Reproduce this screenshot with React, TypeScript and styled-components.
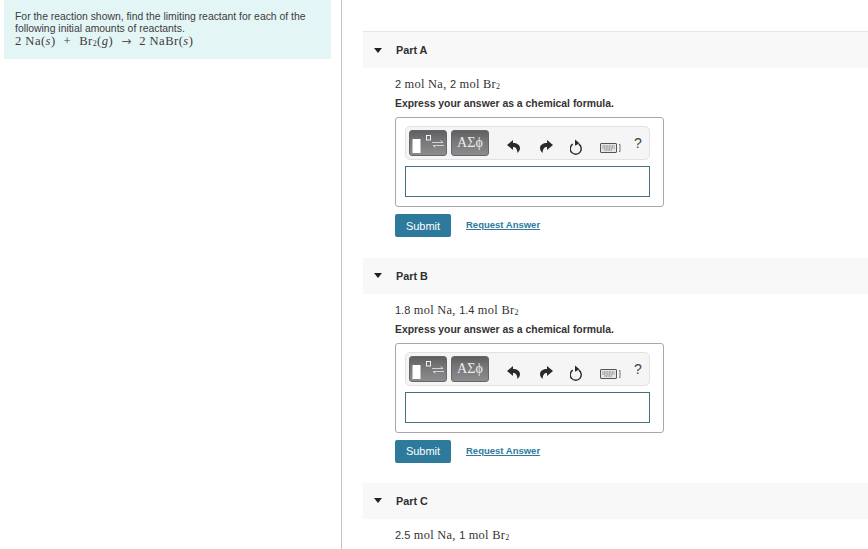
import React from 'react';
import styled, { createGlobalStyle } from 'styled-components';

const GlobalStyle = createGlobalStyle`
  html, body {
    margin: 0;
    padding: 0;
    background: #fff;
    overflow: hidden;
  }
  body {
    font-family: "Liberation Sans", Arial, sans-serif;
    color: #333;
  }
`;

const Page = styled.div`
  display: flex;
  width: 868px;
  height: 549px;
  overflow: hidden;
`;

const LeftPane = styled.div`
  flex: none;
  box-sizing: border-box;
  width: 342px;
  height: 549px;
  padding-left: 4px;
  border-right: 1px solid #c4c4c4;
`;

const Intro = styled.div`
  box-sizing: border-box;
  width: 327px;
  height: 59px;
  padding: 11px 11px 0;
  background: #e4f5f6;
  font-size: 10.4px;
  line-height: 12px;
  color: #3c3c3c;
`;

const Equation = styled.div`
  font-family: "Liberation Serif", "Times New Roman", serif;
  font-size: 12.6px;
  line-height: 13px;
  letter-spacing: 0.45px;
  white-space: nowrap;
  i { font-style: italic; }
  sub { font-size: 8px; line-height: 0; vertical-align: -1px; }
`;

const Arrow = styled.span`
  font-family: "DejaVu Sans", sans-serif;
  font-size: 12px;
  line-height: 0;
  letter-spacing: 0;
  color: #555;
  margin: 0 8px;
`;

const Plus = styled.span`
  line-height: 0;
  margin: 0 8px;
`;

const RightPane = styled.div`
  flex: 1;
  padding: 31px 0 0 21px;
  min-width: 0;
`;

const PartHeader = styled.div<{ $first: boolean }>`
  display: flex;
  align-items: center;
  box-sizing: border-box;
  height: ${(p) => (p.$first ? '37px' : '35.5px')};
  padding-left: 11px;
  background: #f8f8f8;
  border-top: ${(p) => (p.$first ? '1px solid #e6e6e6' : 'none')};
`;

const Caret = styled.span`
  width: 0;
  height: 0;
  border-left: 4.5px solid transparent;
  border-right: 4.5px solid transparent;
  border-top: 5px solid #222;
`;

const PartTitle = styled.span`
  margin-left: 14px;
  font-size: 10.8px;
  font-weight: 700;
  color: #2f2f2f;
`;

const PartBody = styled.div<{ $first: boolean }>`
  box-sizing: border-box;
  height: ${(p) => (p.$first ? '190px' : '189.5px')};
  padding: 9px 0 0 32px;
`;

const Amounts = styled.div`
  font-family: "Liberation Serif", "Times New Roman", serif;
  font-size: 12.4px;
  line-height: 15px;
  letter-spacing: 0.3px;
  color: #333;
  sub { font-size: 8px; line-height: 0; vertical-align: -1px; }
`;

const Num = styled.span`
  font-family: "Liberation Sans", Arial, sans-serif;
  font-size: 11px;
  letter-spacing: 0;
`;

const Prompt = styled.div`
  margin-top: 5px;
  font-size: 10.4px;
  line-height: 14px;
  font-weight: 700;
  color: #333;
`;

const AnswerBox = styled.div`
  box-sizing: border-box;
  width: 269px;
  height: 90px;
  margin-top: 6px;
  padding: 8px 13px 0 9px;
  border: 1px solid #a9a9a9;
  border-radius: 3px;
`;

const Toolbar = styled.div`
  display: flex;
  align-items: flex-start;
  box-sizing: border-box;
  width: 245px;
  height: 34px;
  padding: 3px 0 0 3px;
  background: #f5f5f5;
  border: 1px solid #e2e2e2;
  border-radius: 5px;
`;

const TemplateButton = styled.div`
  display: flex;
  flex: none;
  align-items: center;
  justify-content: center;
  box-sizing: border-box;
  width: 38px;
  height: 26px;
  margin-right: 4px;
  border: 1px solid #666;
  border-radius: 3px;
  background: linear-gradient(#5f5f61, #767678 40%, #8c8c8e);
  color: #ececec;
  font-family: "Liberation Serif", "Times New Roman", serif;
  font-size: 14px;
  letter-spacing: 0.2px;
`;

const ToolIcon = styled.svg<{ $left: number; $top: number }>`
  flex: none;
  margin-left: ${(p) => p.$left}px;
  margin-top: ${(p) => p.$top}px;
`;

const Help = styled.span`
  flex: none;
  margin-left: 13px;
  margin-top: 5px;
  font-size: 14px;
  color: #444;
`;

const AnswerInput = styled.div`
  box-sizing: border-box;
  width: 245px;
  height: 31px;
  margin-top: 6px;
  border: 1px solid #43717f;
  background: #fff;
`;

const Actions = styled.div`
  display: flex;
  align-items: center;
  margin-top: 7px;
`;

const SubmitButton = styled.div`
  display: flex;
  align-items: center;
  justify-content: center;
  width: 56px;
  height: 23px;
  background: #2e7a9c;
  border-radius: 2px;
  color: #fff;
  font-size: 11px;
`;

const RequestLink = styled.span`
  margin-left: 15px;
  margin-top: -2px;
  color: #2e7a9c;
  font-size: 9.5px;
  font-weight: 700;
  text-decoration: underline;
`;

const TemplateIcon = () => (
  <svg width="34" height="22" viewBox="0 0 34 22">
    <rect x="1.5" y="7" width="8" height="14" fill="#fff" />
    <rect x="15.5" y="3.5" width="4" height="4.5" fill="none" stroke="#fff" strokeWidth="0.9" />
    <path d="M21 10.5h11l-2.5-2M33 13.5H22l2.5 2" fill="none" stroke="#e8e8e8" strokeWidth="0.8" />
  </svg>
);

const Undo = () => (
  <ToolIcon $left={14} $top={10} width="13" height="13" viewBox="0 0 13 13">
    <path d="M6 0L0 5l6 5V7c2.500 0 4 1 4.500 6 1.500-1.500 2.500-3 2.500-5 0-3-3-5-7-5z" fill="#2a2a2a" />
  </ToolIcon>
);

const Redo = () => (
  <ToolIcon $left={20} $top={10} width="13" height="13" viewBox="0 0 13 13">
    <path d="M7 0l6 5-6 5V7c-2.500 0-4 1-4.500 6C1 11.500 0 10 0 8c0-3 3-5 7-5z" fill="#2a2a2a" />
  </ToolIcon>
);

const Reset = () => (
  <ToolIcon $left={17} $top={9} width="13" height="16" viewBox="0 0 13 16">
    <path d="M8.800 5.200A5.500 5.500 0 1 1 2.700 5.200" fill="none" stroke="#2a2a2a" strokeWidth="1.400" />
    <path d="M5 .5l4.500 3.700L5 6.800z" fill="#2a2a2a" />
  </ToolIcon>
);

const Keyboard = () => (
  <ToolIcon $left={17} $top={13} width="21" height="10" viewBox="0 0 21 10">
    <rect x=".5" y=".5" width="16" height="9" rx=".5" fill="#e6e6e6" stroke="#555" />
    <path d="M2.500 3h12M2.500 5h12M4.500 7h8" stroke="#666" strokeWidth="1" strokeDasharray="1 .6" />
    <path d="M19 1.500h1v7h-1" fill="none" stroke="#555" strokeWidth=".8" />
  </ToolIcon>
);

interface PartData {
  title: string;
  sodium: string;
  bromine: string;
  open: boolean;
}

const parts: PartData[] = [
  { title: 'Part A', sodium: '2', bromine: '2', open: true },
  { title: 'Part B', sodium: '1.8', bromine: '1.4', open: true },
  { title: 'Part C', sodium: '2.5', bromine: '1', open: false },
];

const App: React.FC = () => {
  return (
    <Page>
      <GlobalStyle />
      <LeftPane>
        <Intro>
          For the reaction shown, find the limiting reactant for each of the following initial amounts of reactants.
          <Equation>
            2 Na(<i>s</i>)<Plus>+</Plus>Br<sub>2</sub>(<i>g</i>)<Arrow>→</Arrow>2 NaBr(<i>s</i>)
          </Equation>
        </Intro>
      </LeftPane>
      <RightPane>
        {parts.map((part, index) => (
          <div key={part.title}>
            <PartHeader $first={index === 0}>
              <Caret />
              <PartTitle>{part.title}</PartTitle>
            </PartHeader>
            <PartBody $first={index === 0}>
              <Amounts>
                <Num>{part.sodium}</Num> mol Na, <Num>{part.bromine}</Num> mol Br<sub>2</sub>
              </Amounts>
              {part.open && (
                <>
                  <Prompt>Express your answer as a chemical formula.</Prompt>
                  <AnswerBox>
                    <Toolbar>
                      <TemplateButton><TemplateIcon /></TemplateButton>
                      <TemplateButton>ΑΣϕ</TemplateButton>
                      <Undo />
                      <Redo />
                      <Reset />
                      <Keyboard />
                      <Help>?</Help>
                    </Toolbar>
                    <AnswerInput />
                  </AnswerBox>
                  <Actions>
                    <SubmitButton>Submit</SubmitButton>
                    <RequestLink>Request Answer</RequestLink>
                  </Actions>
                </>
              )}
            </PartBody>
          </div>
        ))}
      </RightPane>
    </Page>
  );
};

export default App;
